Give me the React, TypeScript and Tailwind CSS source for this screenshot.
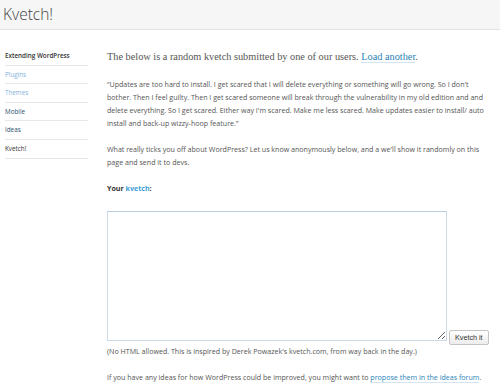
const sans = "font-['Open_Sans','Liberation_Sans',sans-serif]";

const sections = [
  { label: "Extending WordPress", cls: "text-[#333] font-semibold" },
  { label: "Plugins", cls: "text-[#7fb3dc]" },
  { label: "Themes", cls: "text-[#7fb3dc]" },
  { label: "Mobile", cls: "text-[#2c4f6e]" },
  { label: "Ideas", cls: "text-[#2c4f6e]" },
  { label: "Kvetch!", cls: "text-[#333]" },
];

function Sidebar() {
  return (
    <ul className="w-[83px] shrink-0">
      {sections.map((s) => (
        <li key={s.label} className={`flex h-[18.6px] items-center border-b border-[#e8e8e8] text-[6.3px] ${s.cls}`}>
          {s.label}
        </li>
      ))}
    </ul>
  );
}

export default function App() {
  return (
    <div className={`min-h-[388px] w-[500px] bg-white ${sans}`}>
      <header className="flex h-[30px] items-center border-b border-[#e2e2e2] bg-[#f6f6f6] px-[3px]">
        <h1 className="text-[15.5px] font-light leading-none text-[#444]">Kvetch!</h1>
      </header>

      <div className="flex gap-[19px] pl-[5px] pt-[17px]">
        <Sidebar />

        <main className="w-[386px] text-[7.1px] leading-[13px] text-[#555]">
          <h2 className="font-['Liberation_Serif','DejaVu_Serif',serif] text-[10.3px] leading-[19px] text-[#555]">
            The below is a random kvetch submitted by one of our users.{" "}
            <a className="border-b border-[#d6e4ef] text-[#2a84b8]">Load another</a>.
          </h2>

          <p className="mt-[12px]">
            “Updates are too hard to install. I get scared that I will delete everything or something will go wrong. So I
            don't bother. Then I feel guilty. Then I get scared someone will break through the vulnerability in my old
            edition and and delete everything. So I get scared. Either way I'm scared. Make me less scared. Make updates
            easier to install/ auto install and back-up wizzy-hoop feature.”
          </p>

          <p className="mt-[13px]">
            What really ticks you off about WordPress? Let us know anonymously below, and a we'll show it randomly on this
            page and send it to devs.
          </p>

          <p className="mt-[13px] font-bold text-[#333]">
            Your <span className="text-[#3ea0d8]">kvetch</span>:
          </p>

          <div className="mt-[16px] flex items-end gap-[2px]">
            <textarea className="mb-[4px] h-[130px] w-[340px] rounded-none border border-[#cddbe8] border-t-[#b9cde0] bg-white outline-none" />
            <button className="h-[15px] rounded-[2px] border border-[#c4c4c4] bg-gradient-to-b from-white to-[#ececec] px-[5px] font-['Liberation_Sans',sans-serif] text-[7.2px] leading-none text-[#333]">
              Kvetch it
            </button>
          </div>

          <p>(No HTML allowed. This is inspired by Derek Powazek's kvetch.com, from way back in the day.)</p>

          <p className="mt-[13px]">
            If you have any ideas for how WordPress could be improved, you might want to{" "}
            <a className="border-b border-[#d6e4ef] text-[#2a84b8]">propose them in the ideas forum</a>.
          </p>
        </main>
      </div>
    </div>
  );
}
